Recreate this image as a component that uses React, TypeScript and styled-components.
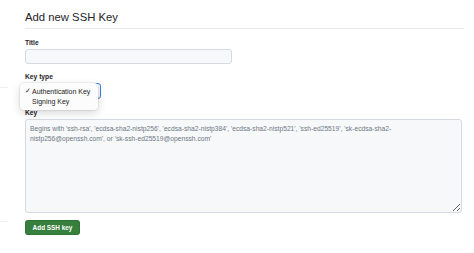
import React from "react";
import styled, { createGlobalStyle } from "styled-components";

const Global = createGlobalStyle`
  html, body { margin: 0; padding: 0; background: #ffffff; }
  body { font-family: "Liberation Sans", Arial, sans-serif; color: #1f2328; }
`;

const Layout = styled.div`
  display: grid;
  grid-template-columns: 8px 1fr;
  column-gap: 17px;
  width: 474px;
  height: 253px;
  overflow: hidden;
`;

const Sidebar = styled.div`
  display: flex;
  flex-direction: column;
`;

const SideRule = styled.div<{ $top: number }>`
  margin-top: ${(p) => p.$top}px;
  height: 1px;
  background: #eeeff1;
`;

const Main = styled.main`
  display: flex;
  flex-direction: column;
  padding-top: 10px;
  width: 439px;
`;

const Heading = styled.h2`
  margin: 0;
  font-size: 11.3px;
  line-height: 14px;
  font-weight: 400;
  color: #1f2328;
  padding-bottom: 4px;
  border-bottom: 1px solid #e8eaed;
`;

const Field = styled.div<{ $mt: number }>`
  display: flex;
  flex-direction: column;
  margin-top: ${(p) => p.$mt}px;
  position: relative;
`;

const Label = styled.label<{ $gap: number }>`
  font-size: 6.7px;
  line-height: 9px;
  font-weight: 700;
  color: #1f2328;
  margin-bottom: ${(p) => p.$gap}px;
`;

const TextInput = styled.input`
  box-sizing: border-box;
  width: 207px;
  height: 15px;
  border: 1px solid #d5dae0;
  border-radius: 3px;
  background: #f6f8fa;
  padding: 0 4px;
  font-family: inherit;
  font-size: 6.6px;
  outline: none;
`;

const SelectBox = styled.div`
  box-sizing: border-box;
  width: 76px;
  height: 16px;
  border: 1.5px solid #3b7fe0;
  border-radius: 3px;
  background: #f6f8fa;
`;

const Menu = styled.ul`
  position: absolute;
  left: -5px;
  top: 11px;
  width: 78px;
  box-sizing: border-box;
  margin: 0;
  padding: 3px 0;
  list-style: none;
  background: #fcfcfc;
  border-radius: 4px;
  box-shadow: 0 0 0 0.5px rgba(0, 0, 0, 0.1), 0 3px 8px rgba(0, 0, 0, 0.16);
  z-index: 2;
`;

const MenuItem = styled.li`
  display: flex;
  align-items: center;
  height: 10.5px;
  font-size: 7px;
  color: #222;
`;

const Check = styled.span`
  width: 12px;
  padding-left: 5px;
  box-sizing: border-box;
  font-size: 6.5px;
`;

const KeyArea = styled.textarea`
  box-sizing: border-box;
  width: 437px;
  height: 94px;
  border: 1px solid #d5dae0;
  border-radius: 3px;
  background: #f6f8fa;
  padding: 3.5px 4px;
  font-family: "Liberation Sans", Arial, sans-serif;
  font-size: 6.7px;
  line-height: 10px;
  color: #1f2328;
  outline: none;
  &::placeholder {
    color: #6e7781;
  }
`;

const Submit = styled.button`
  box-sizing: border-box;
  align-self: flex-start;
  margin-top: 7px;
  width: 55px;
  height: 15px;
  border: 1px solid rgba(0, 0, 0, 0.1);
  border-radius: 3px;
  background: #377f3c;
  color: #ffffff;
  font-family: inherit;
  font-size: 6.4px;
  font-weight: 700;
  padding: 0;
  cursor: pointer;
`;

const placeholder =
  "Begins with 'ssh-rsa', 'ecdsa-sha2-nistp256', 'ecdsa-sha2-nistp384', 'ecdsa-sha2-nistp521', 'ssh-ed25519', 'sk-ecdsa-sha2-nistp256@openssh.com', or 'sk-ssh-ed25519@openssh.com'";

export default function App() {
  return (
    <>
      <Global />
      <Layout>
        <Sidebar>
          <SideRule $top={87} />
          <SideRule $top={133} />
        </Sidebar>
        <Main>
          <Heading>Add new SSH Key</Heading>
          <Field $mt={9}>
            <Label $gap={2}>Title</Label>
            <TextInput />
          </Field>
          <Field $mt={8}>
            <Label $gap={2}>Key type</Label>
            <SelectBox />
            <Menu>
              <MenuItem>
                <Check>✓</Check>Authentication Key
              </MenuItem>
              <MenuItem>
                <Check />Signing Key
              </MenuItem>
            </Menu>
          </Field>
          <Field $mt={9}>
            <Label $gap={2}>Key</Label>
            <KeyArea placeholder={placeholder} />
          </Field>
          <Submit>Add SSH key</Submit>
        </Main>
      </Layout>
    </>
  );
}
